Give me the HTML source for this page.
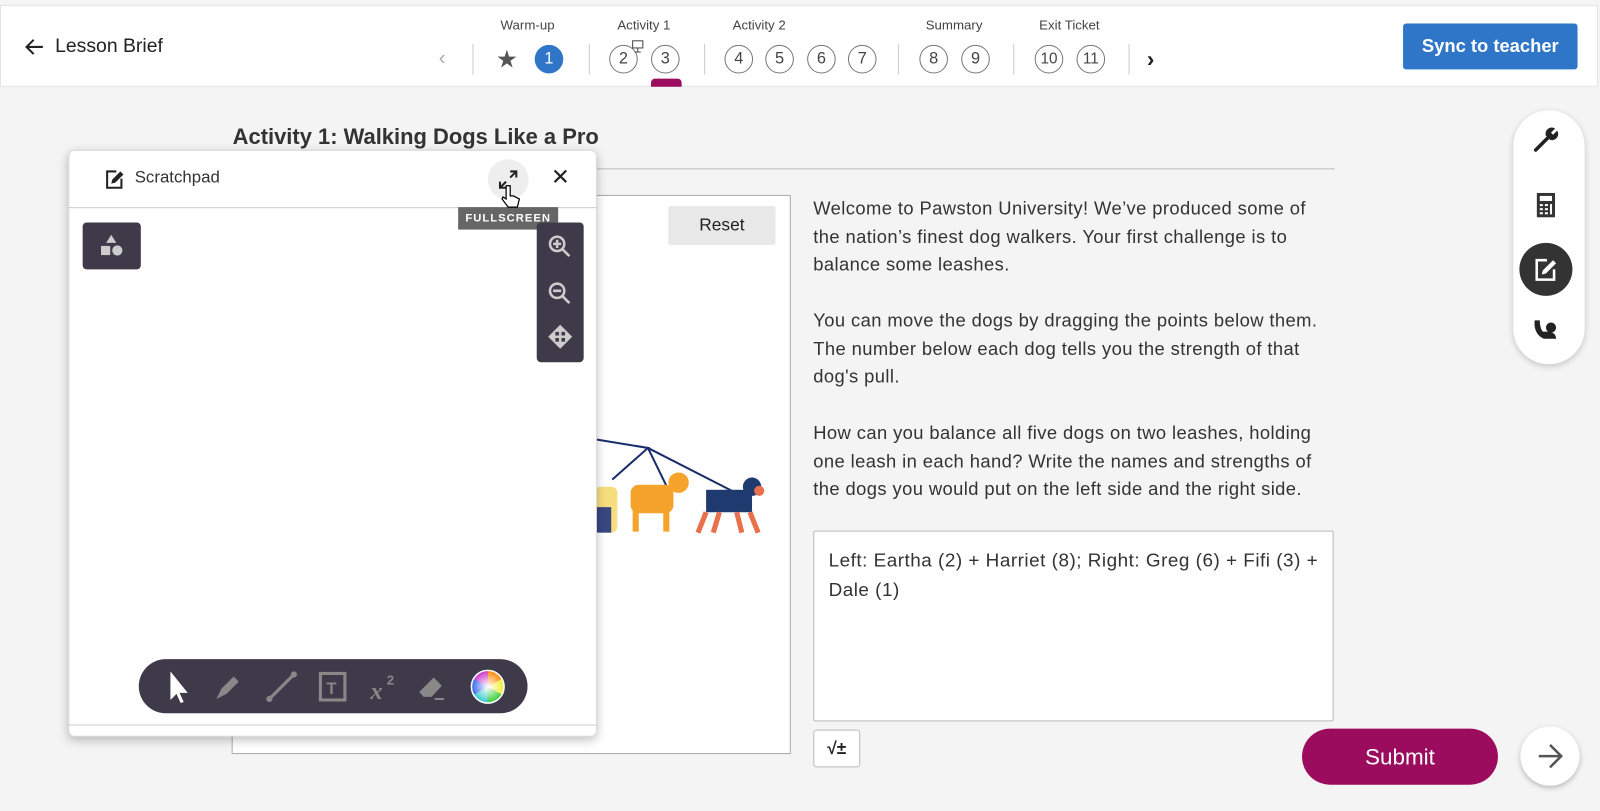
<!DOCTYPE html>
<html><head><meta charset="utf-8"><style>
*{box-sizing:border-box;margin:0;padding:0}
body{width:1600px;height:811px;background:#f4f4f4;font-family:"Liberation Sans",sans-serif;color:#222;position:relative;overflow:hidden}
#w{position:absolute;left:0;top:0;width:1568px;height:795px;transform:scale(1.0204);transform-origin:0 0}
.a{position:absolute}
.hdr{left:0;top:5px;width:1566px;height:80px;background:#fff;border:1px solid #e4e4e4}
.lbl{font-size:13px;color:#444;top:17px;transform:translateX(-50%)}
.c{width:28px;height:28px;border:1px solid #777;border-radius:50%;font-size:16px;color:#444;text-align:center;line-height:26px;top:44px;margin-left:-14px}
.dv{width:1px;height:30px;background:#ccc;top:43px}
.p{font-size:18px;letter-spacing:0.4px;line-height:27.5px;color:#333;left:797px;white-space:nowrap}
.ib{background:#3f3a4a;border-radius:4px}
</style></head><body><div id="w">
<div class="a hdr"></div>
<svg class="a" style="left:24px;top:37px" width="20" height="18" viewBox="0 0 20 18"><path d="M9 2L2 9l7 7M2 9h16" stroke="#222" stroke-width="2" fill="none"/></svg>
<div class="a" style="left:54px;top:35px;font-size:19px">Lesson Brief</div>
<div class="a lbl" style="left:517px">Warm-up</div>
<div class="a lbl" style="left:631px">Activity 1</div>
<div class="a lbl" style="left:744px">Activity 2</div>
<div class="a lbl" style="left:935px">Summary</div>
<div class="a lbl" style="left:1048px">Exit Ticket</div>
<div class="a" style="left:430px;top:46px;font-size:20px;color:#aaa">‹</div>
<div class="a" style="left:1124px;top:45px;font-size:22px;color:#222;font-weight:bold">›</div>
<div class="a dv" style="left:463px"></div><div class="a dv" style="left:577px"></div><div class="a dv" style="left:690px"></div><div class="a dv" style="left:880px"></div><div class="a dv" style="left:993px"></div><div class="a dv" style="left:1106px"></div>
<div class="a" style="left:486px;top:44px;font-size:24px;color:#555">★</div>
<div class="a c" style="left:538px;background:#2f76c9;border-color:#2f76c9;color:#fff">1</div>
<div class="a c" style="left:611px">2</div>
<svg class="a" style="left:618px;top:39px" width="14" height="13"><rect x="2" y="1" width="10" height="7" fill="none" stroke="#444"/><path d="M7 8v4M4 12h6" stroke="#444"/></svg>
<div class="a c" style="left:652px">3</div>
<div class="a c" style="left:724px">4</div><div class="a c" style="left:764px">5</div><div class="a c" style="left:805px">6</div><div class="a c" style="left:845px">7</div>
<div class="a c" style="left:915px">8</div><div class="a c" style="left:956px">9</div>
<div class="a c" style="left:1028px;font-size:15px">10</div><div class="a c" style="left:1069px;font-size:15px">11</div>
<div class="a" style="left:638px;top:77px;width:30px;height:8px;background:#9c0c5e;border-radius:4px 4px 0 0"></div>
<div class="a" style="left:1375px;top:23px;width:171px;height:45px;background:#2f76c9;border-radius:3px;color:#fff;font-size:18px;font-weight:bold;text-align:center;line-height:45px">Sync to teacher</div>

<div class="a" style="left:228px;top:122px;font-size:21.5px;font-weight:bold;color:#333">Activity 1: Walking Dogs Like a Pro</div>
<div class="a" style="left:228px;top:165px;width:1080px;height:1px;background:#bbb"></div>
<div class="a" style="left:227px;top:191px;width:548px;height:548px;background:#fff;border:1px solid #aaa"></div>
<div class="a" style="left:655px;top:202px;width:105px;height:38px;background:#e8e8e8;border-radius:2px;font-size:17px;text-align:center;line-height:38px">Reset</div>
<svg class="a" style="left:580px;top:425px" width="175" height="100">
<path d="M0 5L55 14L20 45M55 14L75 55M55 14L145 60" stroke="#1a2d6b" stroke-width="2" fill="none"/>
<rect x="3" y="52" width="22" height="45" rx="6" fill="#f6de7e"/><rect x="3" y="72" width="16" height="25" fill="#3a4680"/>
<rect x="38" y="50" width="42" height="28" rx="8" fill="#f6a32b"/><rect x="40" y="70" width="6" height="26" fill="#f6a32b"/><rect x="70" y="70" width="6" height="26" fill="#f6a32b"/><circle cx="85" cy="48" r="10" fill="#f6a32b"/>
<rect x="112" y="55" width="45" height="22" fill="#1e3a6e"/><path d="M112 77l-8 20M125 77l-6 20M142 77l5 20M155 77l8 20" stroke="#e8704a" stroke-width="5"/><circle cx="157" cy="52" r="9" fill="#1e3a6e"/><circle cx="164" cy="56" r="5" fill="#e8704a"/>
</svg>
<div class="a p" style="top:191px">Welcome to Pawston University! We’ve produced some of<br>the nation’s finest dog walkers. Your first challenge is to<br>balance some leashes.</div>
<div class="a p" style="top:301px">You can move the dogs by dragging the points below them.<br>The number below each dog tells you the strength of that<br>dog's pull.</div>
<div class="a p" style="top:411px">How can you balance all five dogs on two leashes, holding<br>one leash in each hand? Write the names and strengths of<br>the dogs you would put on the left side and the right side.</div>
<div class="a" style="left:797px;top:520px;width:510px;height:187px;background:#fff;border:1px solid #bbb;border-radius:2px;padding:13px 14px;font-size:18.5px;letter-spacing:0.5px;line-height:29px;color:#333;white-space:nowrap">Left: Eartha (2) + Harriet (8); Right: Greg (6) + Fifi (3) +<br>Dale (1)</div>
<div class="a" style="left:797px;top:715px;width:46px;height:37px;background:#fff;border:1px solid #bbb;border-radius:3px;text-align:center;line-height:35px;font-size:17px;font-weight:bold">√±</div>
<div class="a" style="left:1276px;top:714px;width:192px;height:55px;background:#9c0c5e;border-radius:28px;color:#fff;font-size:22px;text-align:center;line-height:55px">Submit</div>
<div class="a" style="left:1490px;top:712px;width:58px;height:58px;background:#fff;border-radius:50%;box-shadow:0 2px 5px rgba(0,0,0,.25)"></div>
<svg class="a" style="left:1505px;top:727px" width="28" height="28"><path d="M14 3l11 11-11 11M25 14H3" stroke="#555" stroke-width="2.5" fill="none"/></svg>

<div class="a" style="left:1483px;top:108px;width:70px;height:249px;background:#fff;border-radius:35px;box-shadow:0 2px 6px rgba(0,0,0,.2)"></div>
<svg class="a" style="left:1501px;top:123px" width="28" height="28"><path d="M4 24L16 12" stroke="#222" stroke-width="3.5" stroke-linecap="round"/><path d="M14 10a6 6 0 0 1 9-7l-4 4 2 2 4-4a6 6 0 0 1-7 9z" fill="#222"/></svg>
<svg class="a" style="left:1506px;top:189px" width="18" height="24"><rect width="18" height="24" rx="1" fill="#333"/><rect x="3" y="3" width="12" height="5" fill="#fff"/><g fill="#fff"><rect x="3" y="11" width="3" height="2"/><rect x="8" y="11" width="3" height="2"/><rect x="3" y="15" width="3" height="2"/><rect x="8" y="15" width="3" height="2"/><rect x="3" y="19" width="3" height="2"/><rect x="8" y="19" width="3" height="2"/><rect x="13" y="11" width="2" height="10"/></g></svg>
<div class="a" style="left:1489px;top:238px;width:52px;height:52px;background:#333;border-radius:50%"></div>
<svg class="a" style="left:1503px;top:251px" width="26" height="26"><path d="M13 4H3v19h17V13" stroke="#fff" stroke-width="2.5" fill="none"/><path d="M8 18l1-4 10-10 3 3-10 10z" fill="#fff"/></svg>
<svg class="a" style="left:1501px;top:312px" width="28" height="28"><path d="M3 2c-1 8 2 15 9 18h12c0-4-3-7-8-7H11C9 11 8 6 8 2z" fill="#222"/><circle cx="19" cy="9" r="5" fill="#222"/></svg>

<div class="a" style="left:67px;top:147px;width:518px;height:575px;background:#fff;border:1px solid #ddd;border-radius:6px;box-shadow:0 3px 10px rgba(0,0,0,.25)"></div>
<div class="a" style="left:67px;top:203px;width:518px;height:1px;background:#ccc"></div>
<div class="a" style="left:67px;top:710px;width:518px;height:1px;background:#ccc"></div>
<svg class="a" style="left:103px;top:164px" width="20" height="22"><path d="M11 4H2v16h14V11" stroke="#222" stroke-width="2" fill="none"/><path d="M6 16l1-4 8-8 3 3-8 8z" fill="#222"/></svg>
<div class="a" style="left:132px;top:165px;font-size:16.5px;color:#333">Scratchpad</div>
<div class="a" style="left:478px;top:156px;width:40px;height:40px;background:#eee;border-radius:50%"></div>
<svg class="a" style="left:488px;top:166px" width="20" height="20"><path d="M12 2h6v6M18 2l-6 6M8 18H2v-6M2 18l6-6" stroke="#222" stroke-width="2" fill="none"/></svg>
<div class="a" style="left:540px;top:161px;font-size:22px;color:#222">✕</div>
<div class="a" style="left:449px;top:203px;width:98px;height:22px;background:#666;color:#fff;font-size:11px;letter-spacing:1px;text-align:center;line-height:22px;font-weight:bold">FULLSCREEN</div>
<div class="a ib" style="left:81px;top:218px;width:57px;height:46px"></div>
<svg class="a" style="left:96px;top:229px" width="26" height="24"><path d="M13 1l5 8h-10z" fill="#ccc"/><rect x="3" y="12" width="9" height="9" fill="#ccc"/><circle cx="19" cy="16.5" r="5" fill="#ccc"/></svg>
<div class="a ib" style="left:526px;top:218px;width:46px;height:137px"></div>
<svg class="a" style="left:536px;top:230px" width="26" height="115" fill="none" stroke="#ccc" stroke-width="2.5"><circle cx="10" cy="9" r="7"/><path d="M15 14l7 7M10 5v8M6 9h8"/><circle cx="10" cy="55" r="7"/><path d="M15 60l7 7M6 55h8"/><path d="M13 92v16M5 100h16M13 90l-4 4h8zM13 110l-4-4h8zM3 100l4-4v8zM23 100l-4-4v8z" fill="#ccc"/></svg>
<div class="a" style="left:136px;top:646px;width:381px;height:53px;background:#3f3a4a;border-radius:27px"></div>
<svg class="a" style="left:160px;top:655px" width="340" height="36">
<path d="M7 3v28l6-6 4 9 3-1-4-9h8z" fill="#fff"/>
<path d="M52 30l5-10 12-12 5 5-12 12-10 5z" fill="#888"/>
<path d="M104 30l24-24" stroke="#888" stroke-width="3"/><circle cx="104" cy="30" r="3" fill="#888"/><circle cx="128" cy="6" r="3" fill="#888"/>
<rect x="154" y="5" width="24" height="26" fill="none" stroke="#888" stroke-width="3"/><text x="160" y="25" fill="#888" font-size="16" font-weight="bold" font-family="Liberation Sans">T</text>
<text x="203" y="30" fill="#888" font-size="24" font-style="italic" font-weight="bold" font-family="Liberation Serif">x</text><text x="219" y="16" fill="#888" font-size="13" font-weight="bold" font-family="Liberation Sans">2</text>
<path d="M255 28l-4-5 14-14 8 8-10 11z" fill="#888"/><path d="M266 30h9" stroke="#888" stroke-width="2"/>
<defs><radialGradient id="g"><stop offset="0" stop-color="#fff"/><stop offset="1" stop-color="#fff" stop-opacity="0"/></radialGradient></defs>
<circle cx="318" cy="18" r="16" fill="#e33"/><path d="M318 18L318 2A16 16 0 0 1 332 10z" fill="#f80"/><path d="M318 18L332 10A16 16 0 0 1 332 26z" fill="#ee3"/><path d="M318 18L332 26A16 16 0 0 1 318 34z" fill="#3c3"/><path d="M318 18L318 34A16 16 0 0 1 304 26z" fill="#3cc"/><path d="M318 18L304 26A16 16 0 0 1 304 10z" fill="#36e"/><path d="M318 18L304 10A16 16 0 0 1 318 2z" fill="#c3c"/><circle cx="318" cy="18" r="16" fill="url(#g)" stroke="#fff" stroke-width="1.5"/>
</svg>
<svg class="a" style="left:490px;top:180px" width="20" height="26"><path d="M6 2v13l-3-2-1 2 6 8h9l2-8-6-3H10V2z" fill="#fff" stroke="#000" stroke-width="1.2"/></svg>
</div></body></html>
